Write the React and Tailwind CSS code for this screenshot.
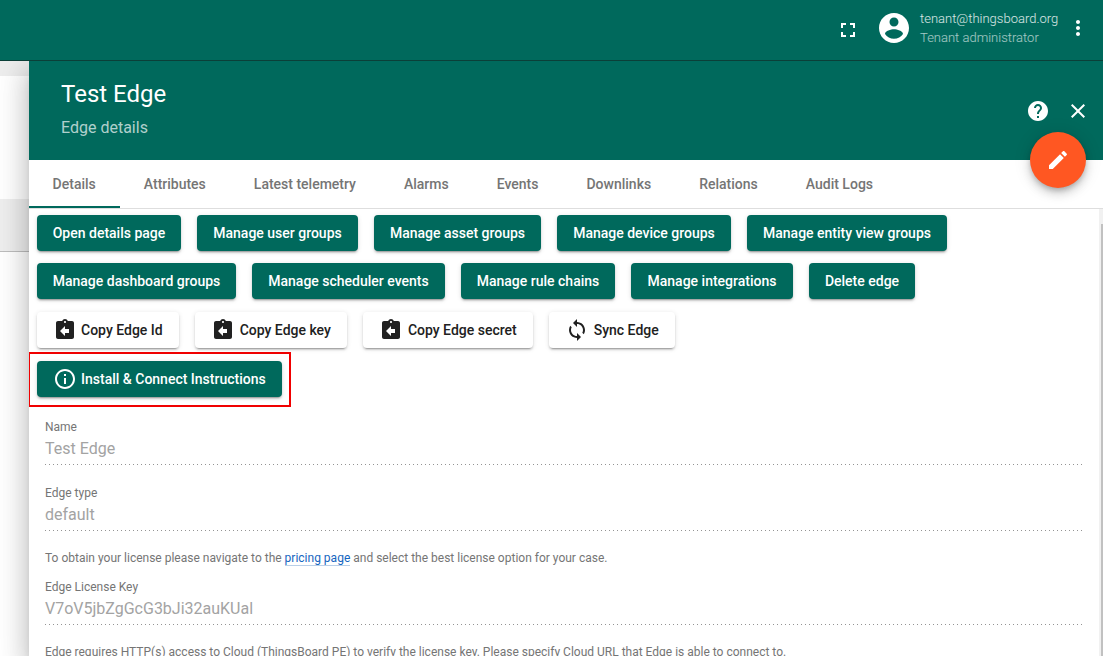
const P = {
  fullscreen: "M7 14H5v5h5v-2H7v-3zm-2-4h2V7h3V5H5v5zm12 7h-3v2h5v-5h-2v3zM14 5v2h3v3h2V5h-5z",
  account: "M12 2C6.48 2 2 6.48 2 12s4.48 10 10 10 10-4.48 10-10S17.52 2 12 2zm0 3c1.66 0 3 1.34 3 3s-1.34 3-3 3-3-1.34-3-3 1.34-3 3-3zm0 14.2c-2.5 0-4.71-1.28-6-3.22.03-1.99 4-3.08 6-3.08 1.99 0 5.97 1.09 6 3.08-1.29 1.94-3.5 3.22-6 3.22z",
  more: "M12 8c1.1 0 2-.9 2-2s-.9-2-2-2-2 .9-2 2 .9 2 2 2zm0 2c-1.1 0-2 .9-2 2s.9 2 2 2 2-.9 2-2-.9-2-2-2zm0 6c-1.1 0-2 .9-2 2s.9 2 2 2 2-.9 2-2-.9-2-2-2z",
  help: "M12 2C6.48 2 2 6.48 2 12s4.48 10 10 10 10-4.48 10-10S17.52 2 12 2zm1 17h-2v-2h2v2zm2.07-7.75l-.9.92C13.45 12.9 13 13.5 13 15h-2v-.5c0-1.1.45-2.1 1.17-2.83l1.24-1.26c.37-.36.59-.86.59-1.41 0-1.1-.9-2-2-2s-2 .9-2 2H8c0-2.21 1.79-4 4-4s4 1.79 4 4c0 .88-.36 1.68-.93 2.25z",
  close: "M19 6.41L17.59 5 12 10.59 6.41 5 5 6.41 10.59 12 5 17.59 6.41 19 12 13.41 17.59 19 19 17.59 13.41 12z",
  edit: "M3 17.25V21h3.75L17.81 9.94l-3.75-3.75L3 17.25zM20.71 7.04c.39-.39.39-1.02 0-1.41l-2.34-2.34c-.39-.39-1.02-.39-1.41 0l-1.83 1.83 3.75 3.75 1.83-1.83z",
  copy: "M19 3h-4.18C14.4 1.84 13.3 1 12 1c-1.3 0-2.4.84-2.82 2H5c-1.1 0-2 .9-2 2v14c0 1.1.9 2 2 2h14c1.1 0 2-.9 2-2V5c0-1.1-.9-2-2-2zm-7 0c.55 0 1 .45 1 1s-.45 1-1 1-1-.45-1-1 .45-1 1-1zm4 12h-4v3l-5-5 5-5v3h4v4z",
  sync: "M12 4V1L8 5l4 4V6c3.31 0 6 2.69 6 6 0 1.01-.25 1.97-.7 2.8l1.46 1.46C19.54 15.03 20 13.57 20 12c0-4.42-3.58-8-8-8zm0 14c-3.31 0-6-2.69-6-6 0-1.01.25-1.97.7-2.8L5.24 7.74C4.46 8.97 4 10.43 4 12c0 4.42 3.58 8 8 8v3l4-4-4-4v3z",
  info: "M11 7h2v2h-2zm0 4h2v6h-2zm1-9C6.48 2 2 6.48 2 12s4.48 10 10 10 10-4.48 10-10S17.52 2 12 2zm0 18c-4.41 0-8-3.59-8-8s3.59-8 8-8 8 3.59 8 8-3.59 8-8 8z",
};

function Icon({ d, className }) {
  return (
    <svg viewBox="0 0 24 24" fill="currentColor" className={className}>
      <path d={d} />
    </svg>
  );
}

const raised = "shadow-[0_3px_1px_-2px_rgba(0,0,0,0.2),0_2px_2px_0_rgba(0,0,0,0.14),0_1px_5px_0_rgba(0,0,0,0.12)]";

function Primary({ children, icon, width = "" }) {
  return (
    <button className={`h-9 ${width} shrink-0 flex items-center justify-center rounded bg-[#00695c] text-white text-sm font-medium whitespace-nowrap ${icon ? "px-4" : ""} ${raised}`}>
      {icon && <Icon d={icon} className="w-6 h-6 mr-1" />}
      {children}
    </button>
  );
}

function Plain({ children, icon, gap = "mr-[5px]" }) {
  return (
    <button className={`h-9 px-4 flex items-center rounded bg-white text-[#212121] text-sm font-medium whitespace-nowrap ${raised}`}>
      <Icon d={icon} className={`w-6 h-6 ${gap}`} />
      {children}
    </button>
  );
}

function Field({ label, value, className }) {
  return (
    <div className={className}>
      <div className="text-xs leading-[14px] text-[#757575]">{label}</div>
      <div className="text-base leading-5 mt-[5px] text-[#a3a3a3]">{value}</div>
      <div className="mt-[5px] h-px bg-[linear-gradient(to_right,rgba(0,0,0,0.42)_0,rgba(0,0,0,0.42)_33%,transparent_0)] bg-[length:4px_1px]" />
    </div>
  );
}

const tabs = ["Details", "Attributes", "Latest telemetry", "Alarms", "Events", "Downlinks", "Relations", "Audit Logs"];

export default function App() {
  return (
    <div className="w-[1103px] h-[656px] overflow-hidden flex flex-col bg-white [font-family:Roboto,sans-serif]">
      <header className="relative z-20 h-[61px] shrink-0 bg-[#00695c] border-b border-[#0b3f38] flex items-center justify-end text-white">
        <Icon d={P.fullscreen} className="w-6 h-6 mr-4" />
        <Icon d={P.account} className="w-9 h-9 mr-2 mt-[-4px]" />
        <div className="w-[143px] mr-[3px] mt-[-4px] whitespace-nowrap">
          <div className="text-[13px] leading-[18px] font-light text-white/85">tenant@thingsboard.org</div>
          <div className="text-[13px] leading-[18px] font-light text-white/65 mt-[1px]">Tenant administrator</div>
        </div>
        <Icon d={P.more} className="w-6 h-6 mr-[13px] mt-[-4px]" />
      </header>

      <div className="flex-1 flex min-h-0">
        <aside className="w-[29px] shrink-0 flex flex-col">
          <div className="h-[15px] bg-[#ededed]" />
          <div className="h-[123px] bg-white" />
          <div className="h-[53px] bg-[#eeeeee] border-b border-[#bdbdbd]" />
          <div className="flex-1 bg-white" />
        </aside>

        <main className="relative z-10 flex-1 min-w-0 flex flex-col bg-white shadow-[0_8px_10px_-5px_rgba(0,0,0,0.2),0_16px_24px_2px_rgba(0,0,0,0.14),0_6px_30px_5px_rgba(0,0,0,0.12)]">
          <section className="h-[99px] shrink-0 bg-[#00695c] text-white pl-8 relative">
            <h1 className="text-2xl leading-8 pt-[17px] h-[49px]">Test Edge</h1>
            <p className="text-base leading-5 mt-2 text-white/70">Edge details</p>
            <div className="absolute right-[13px] top-[38px] flex gap-4">
              <Icon d={P.help} className="w-6 h-6" />
              <Icon d={P.close} className="w-6 h-6" />
            </div>
          </section>

          <button className="absolute right-[17px] top-[71px] z-10 w-14 h-14 rounded-full bg-[#ff5722] text-white flex items-center justify-center shadow-[0_3px_5px_-1px_rgba(0,0,0,0.2),0_6px_10px_0_rgba(0,0,0,0.14),0_1px_18px_0_rgba(0,0,0,0.12)]">
            <Icon d={P.edit} className="w-6 h-6" />
          </button>

          <nav className="h-[49px] shrink-0 flex border-b border-[#dedede]">
            {tabs.map((t, i) => (
              <div
                key={t}
                className={`px-6 flex items-center text-sm font-medium text-[#757575] ${i === 0 ? "border-b-2 border-[#00695c] pt-[2px] pl-[23.6px]" : "pb-[1px]"}`}
              >
                {t}
              </div>
            ))}
          </nav>

          <div className="flex-1 min-h-0 flex">
            <div className="flex-1 min-w-0 overflow-hidden pl-2">
              <div className="flex gap-4 mt-[6px]">
                <Primary width="w-[144px]">Open details page</Primary>
                <Primary width="w-[161px]">Manage user groups</Primary>
                <Primary width="w-[167px]">Manage asset groups</Primary>
                <Primary width="w-[174px]">Manage device groups</Primary>
                <Primary width="w-[200px]">Manage entity view groups</Primary>
              </div>
              <div className="flex gap-4 mt-3">
                <Primary width="w-[199px]">Manage dashboard groups</Primary>
                <Primary width="w-[193px]">Manage scheduler events</Primary>
                <Primary width="w-[154px]">Manage rule chains</Primary>
                <Primary width="w-[162px]">Manage integrations</Primary>
                <Primary width="w-[106px]">Delete edge</Primary>
              </div>
              <div className="flex gap-4 mt-[13px]">
                <Plain icon={P.copy} gap="mr-1">Copy Edge Id</Plain>
                <Plain icon={P.copy}>Copy Edge key</Plain>
                <Plain icon={P.copy}>Copy Edge secret</Plain>
                <Plain icon={P.sync}>Sync Edge</Plain>
              </div>
              <div className="w-fit ml-[-9px] mt-1 border-2 border-[#f00000] px-[7px] pt-[7px] pb-2">
                <Primary icon={P.info}>Install &amp; Connect Instructions</Primary>
              </div>

              <div className="pl-2 pr-4">
                <Field label="Name" value="Test Edge" className="mt-[13px]" />
                <Field label="Edge type" value="default" className="mt-[21px]" />
                <p className="mt-[19px] text-xs leading-4 text-[#757575]">
                  To obtain your license please navigate to the{" "}
                  <span className="text-[#1565c0] border-b border-[#b9cfe8]">pricing page</span>{" "}
                  and select the best license option for your case.
                </p>
                <Field label="Edge License Key" value="V7oV5jbZgGcG3bJi32auKUal" className="mt-[14px]" />
                <p className="mt-[19px] text-xs leading-4 text-[#757575] whitespace-nowrap">
                  Edge requires HTTP(s) access to Cloud (ThingsBoard PE) to verify the license key. Please specify Cloud URL that Edge is able to connect to.
                </p>
              </div>
            </div>
            <div className="w-1 shrink-0 bg-[#f1f1f1] pt-[15px] pl-[2px]">
              <div className="h-full bg-[#c1c1c1]" />
            </div>
          </div>
        </main>
      </div>
    </div>
  );
}
